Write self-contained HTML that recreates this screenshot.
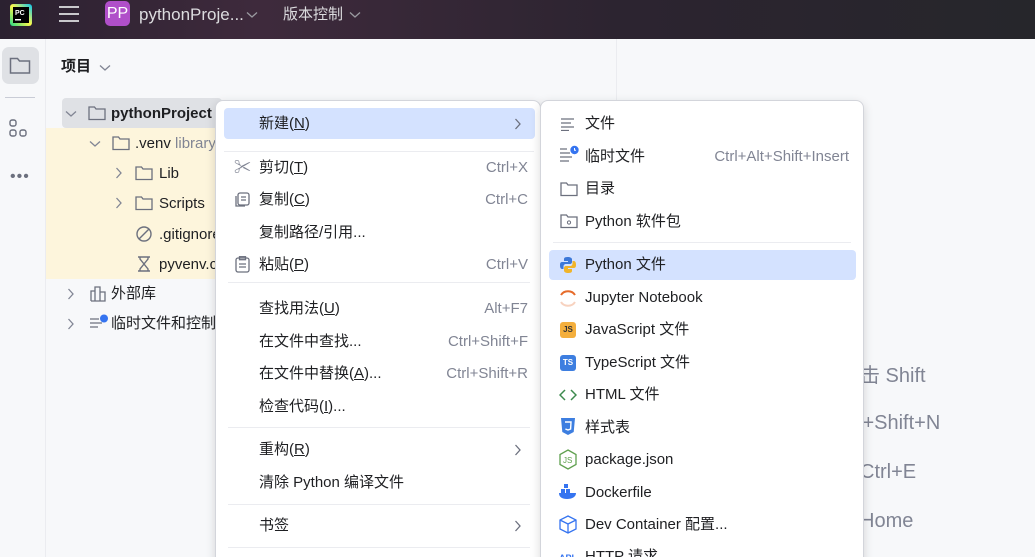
<!DOCTYPE html>
<html><head><meta charset="utf-8"><style>
*{margin:0;padding:0;box-sizing:border-box}
html{width:1035px;height:557px;overflow:hidden}
body{width:1035px;height:557px;overflow:hidden;background:#f7f8fa;font-family:"Liberation Sans","Noto Sans CJK SC",sans-serif;font-size:15px;color:#1e1f22;position:relative}
.abs{position:absolute}
.top{left:0;top:0;width:1035px;height:39px;background:linear-gradient(90deg,#2b2130 0%,#3e2a3c 25%,#2c2430 60%,#26262b 100%)}
.t{position:absolute;white-space:nowrap;line-height:20px}
.menu{position:absolute;background:#fff;border:1px solid #d3d5db;border-radius:8px;box-shadow:0 3px 10px rgba(0,0,0,.15);overflow:hidden}
.sep{position:absolute;height:1px;background:#ebecf0}
.hl{position:absolute;background:#d4e2ff;border-radius:4px}
.sc{position:absolute;color:#818594;white-space:nowrap;line-height:20px;text-align:right}
.gray{color:#818594}
u{text-decoration:underline}
.chr{position:absolute}
</style></head><body>
<div class="abs top"></div>
<svg class="abs" style="left:10px;top:4px" width="22" height="22" viewBox="0 0 22 22"><defs><linearGradient id="g" x1="0" y1="1" x2="1" y2="0"><stop offset="0" stop-color="#21d789"/><stop offset=".5" stop-color="#fcf84a"/><stop offset="1" stop-color="#07c3f2"/></linearGradient></defs><rect x="0" y="0" width="22" height="22" rx="3" fill="url(#g)"/><rect x="3" y="3" width="16" height="16" fill="#000"/><text x="5" y="11" font-size="7" fill="#fff" font-family="Liberation Sans" font-weight="bold">PC</text><rect x="5" y="15" width="6" height="1.5" fill="#fff"/></svg>
<div class="abs" style="left:59px;top:6px;width:20px;height:2px;background:#c9c9cc;box-shadow:0 7px 0 #c9c9cc,0 14px 0 #c9c9cc"></div>
<div class="abs" style="left:105px;top:1px;width:25px;height:25px;border-radius:5px;background:#b04fc9;color:#fff;font-size:16px;line-height:25px;text-align:center">PP</div>
<div class="t" style="left:139px;top:5px;color:#dcdcdf;font-size:17px">pythonProje...</div>
<svg class="chr" style="left:246px;top:11px" width="12" height="8"><path d="M1 1.5l5 4.5 5-4.5" fill="none" stroke="#9a9aa0" stroke-width="1.3"/></svg>
<div class="t" style="left:283px;top:5px;color:#dcdcdf;font-size:15px">版本控制</div>
<svg class="chr" style="left:349px;top:11px" width="12" height="8"><path d="M1 1.5l5 4.5 5-4.5" fill="none" stroke="#9a9aa0" stroke-width="1.3"/></svg>
<!-- left strip -->
<div class="abs" style="left:45px;top:39px;width:1px;height:518px;background:#ebecf0"></div>
<div class="abs" style="left:2px;top:47px;width:37px;height:37px;border-radius:7px;background:#dfe1e5"></div>
<svg class="abs" style="left:9px;top:55px" width="22" height="20"><path d="M1.5 3.5h7l2 2.5h10v12h-19z" fill="none" stroke="#6c707e" stroke-width="1.5"/></svg>
<div class="abs" style="left:5px;top:97px;width:30px;height:1px;background:#c9ccd6"></div>
<svg class="abs" style="left:9px;top:119px" width="22" height="22" fill="none" stroke="#6c707e" stroke-width="1.4"><rect x="1" y="1" width="6" height="6" rx="2"/><rect x="1" y="11" width="6" height="6" rx="2"/><rect x="11" y="11" width="6" height="6" rx="2"/></svg>
<div class="t" style="left:10px;top:167px;color:#6c707e;font-size:16px;letter-spacing:1px">•••</div>
<!-- panel -->
<div class="abs" style="left:616px;top:39px;width:1px;height:518px;background:#ebecf0"></div>
<div class="t" style="left:61px;top:57px;font-weight:bold;font-size:15px">项目</div>
<svg class="chr" style="left:99px;top:64px" width="12" height="8"><path d="M1 1.5l5 4.5 5-4.5" fill="none" stroke="#818594" stroke-width="1.3"/></svg>
<div class="abs" style="left:62px;top:98px;width:160px;height:30px;background:#dfe1e5;border-radius:4px"></div>
<div class="abs" style="left:46px;top:128px;width:175px;height:151px;background:#fdf5dc"></div>
<svg class="chr" style="left:65px;top:110px" width="12" height="8"><path d="M1 1.5l5 4.5 5-4.5" fill="none" stroke="#818594" stroke-width="1.3"/></svg>
<svg class="abs" style="left:88px;top:105px" width="18" height="16"><path d="M1 2h5.5l1.5 2h9v10.5h-16z" fill="none" stroke="#6c707e" stroke-width="1.3"/></svg>
<div class="t" style="left:111px;top:104px;font-weight:bold">pythonProject</div>
<svg class="chr" style="left:89px;top:140px" width="12" height="8"><path d="M1 1.5l5 4.5 5-4.5" fill="none" stroke="#818594" stroke-width="1.3"/></svg>
<svg class="abs" style="left:112px;top:135px" width="18" height="16"><path d="M1 2h5.5l1.5 2h9v10.5h-16z" fill="none" stroke="#6c707e" stroke-width="1.3"/></svg>
<div class="t" style="left:135px;top:134px">.venv <span class="gray">library root</span></div>
<svg class="chr" style="left:115px;top:167px" width="8" height="12"><path d="M1.5 1l4.5 5-4.5 5" fill="none" stroke="#818594" stroke-width="1.3"/></svg>
<svg class="abs" style="left:135px;top:165px" width="18" height="16"><path d="M1 2h5.5l1.5 2h9v10.5h-16z" fill="none" stroke="#6c707e" stroke-width="1.3"/></svg>
<div class="t" style="left:159px;top:164px">Lib</div>
<svg class="chr" style="left:115px;top:197px" width="8" height="12"><path d="M1.5 1l4.5 5-4.5 5" fill="none" stroke="#818594" stroke-width="1.3"/></svg>
<svg class="abs" style="left:135px;top:195px" width="18" height="16"><path d="M1 2h5.5l1.5 2h9v10.5h-16z" fill="none" stroke="#6c707e" stroke-width="1.3"/></svg>
<div class="t" style="left:159px;top:194px">Scripts</div>
<svg class="abs" style="left:136px;top:226px" width="18" height="18" fill="none" stroke="#6c707e" stroke-width="1.4"><circle cx="8" cy="8" r="7"/><path d="M3 13L13 3"/></svg>
<div class="t" style="left:159px;top:225px">.gitignore</div>
<svg class="abs" style="left:137px;top:256px" width="16" height="18" fill="none" stroke="#6c707e" stroke-width="1.4"><path d="M1 1h12M1 15h12M3 1v2l4 5-4 5v2M11 1v2l-4 5 4 5v2"/></svg>
<div class="t" style="left:159px;top:255px">pyvenv.cfg</div>
<svg class="chr" style="left:67px;top:288px" width="8" height="12"><path d="M1.5 1l4.5 5-4.5 5" fill="none" stroke="#818594" stroke-width="1.3"/></svg>
<svg class="abs" style="left:90px;top:286px" width="18" height="16" fill="none" stroke="#6c707e" stroke-width="1.3"><path d="M1 15V5h4v10M5 15V1h5v14M10 15V6h5v9zM1 15h14"/></svg>
<div class="t" style="left:111px;top:284px">外部库</div>
<svg class="chr" style="left:67px;top:318px" width="8" height="12"><path d="M1.5 1l4.5 5-4.5 5" fill="none" stroke="#818594" stroke-width="1.3"/></svg>
<svg class="abs" style="left:89px;top:314px" width="20" height="18"><path d="M1 5h9M1 9h12M1 13h8" stroke="#6c707e" stroke-width="1.3"/><circle cx="15" cy="4.5" r="4" fill="#3574f0"/></svg>
<div class="t" style="left:111px;top:314px">临时文件和控制台</div>
<!-- right bg text -->
<div class="t" style="left:860px;top:364px;color:#818594;font-size:20px;line-height:24px">击 Shift</div>
<div class="t" style="left:858px;top:411px;color:#818594;font-size:20px;line-height:24px">l+Shift+N</div>
<div class="t" style="left:860px;top:460px;color:#818594;font-size:20px;line-height:24px">Ctrl+E</div>
<div class="t" style="left:860px;top:509px;color:#818594;font-size:20px;line-height:24px">Home</div>
<!-- menu 1 -->
<div class="menu" style="left:215px;top:100px;width:326px;height:470px">
<div class="hl" style="left:8px;top:7px;width:311px;height:31px"></div>
<div class="t" style="left:43px;top:13px">新建(<u>N</u>)</div>
<svg class="chr" style="left:298px;top:17px" width="8" height="12"><path d="M1.5 1l4.5 5-4.5 5" fill="none" stroke="#6c707e" stroke-width="1.3"/></svg>
<div class="sep" style="left:8px;top:50px;width:310px"></div>
<div class="t gray" style="left:18px;top:57px;font-size:17px">✂</div>
<div class="t" style="left:43px;top:57px">剪切(<u>T</u>)</div><div class="sc" style="right:12px;top:57px">Ctrl+X</div>
<svg class="abs" style="left:19px;top:91px" width="16" height="16" fill="none" stroke="#6c707e" stroke-width="1.3"><rect x="3" y="1" width="11" height="12" rx="2"/><path d="M1 4v10h9M6 5h5M6 8h5"/></svg>
<div class="t" style="left:43px;top:89px">复制(<u>C</u>)</div><div class="sc" style="right:12px;top:89px">Ctrl+C</div>
<div class="t" style="left:43px;top:122px">复制路径/引用...</div>
<svg class="abs" style="left:19px;top:155px" width="16" height="17" fill="none" stroke="#6c707e" stroke-width="1.3"><rect x="1" y="2" width="13" height="14" rx="2"/><rect x="4.5" y="0.7" width="6" height="3"/><path d="M4 8h7M4 11h7"/></svg>
<div class="t" style="left:43px;top:154px">粘贴(<u>P</u>)</div><div class="sc" style="right:12px;top:154px">Ctrl+V</div>
<div class="sep" style="left:12px;top:181px;width:302px"></div>
<div class="t" style="left:43px;top:198px">查找用法(<u>U</u>)</div><div class="sc" style="right:12px;top:198px">Alt+F7</div>
<div class="t" style="left:43px;top:231px">在文件中查找...</div><div class="sc" style="right:12px;top:231px">Ctrl+Shift+F</div>
<div class="t" style="left:43px;top:263px">在文件中替换(<u>A</u>)...</div><div class="sc" style="right:12px;top:263px">Ctrl+Shift+R</div>
<div class="t" style="left:43px;top:296px">检查代码(<u>I</u>)...</div>
<div class="sep" style="left:12px;top:326px;width:302px"></div>
<div class="t" style="left:43px;top:339px">重构(<u>R</u>)</div>
<svg class="chr" style="left:298px;top:343px" width="8" height="12"><path d="M1.5 1l4.5 5-4.5 5" fill="none" stroke="#6c707e" stroke-width="1.3"/></svg>
<div class="t" style="left:43px;top:372px">清除 Python 编译文件</div>
<div class="sep" style="left:12px;top:403px;width:302px"></div>
<div class="t" style="left:43px;top:415px">书签</div>
<svg class="chr" style="left:298px;top:419px" width="8" height="12"><path d="M1.5 1l4.5 5-4.5 5" fill="none" stroke="#6c707e" stroke-width="1.3"/></svg>
<div class="sep" style="left:12px;top:446px;width:302px"></div>
</div>
<!-- menu 2 -->
<div class="menu" style="left:540px;top:100px;width:324px;height:470px">
<svg class="abs" style="left:19px;top:16px" width="16" height="14" stroke="#6c707e" stroke-width="1.3"><path d="M1 2h13M1 6h10M1 10h13M1 13.5h8"/></svg>
<div class="t" style="left:44px;top:13px">文件</div>
<svg class="abs" style="left:17px;top:44px" width="22" height="20"><path d="M2 8h10M2 12h12M2 16h9M2 4h7" stroke="#6c707e" stroke-width="1.3"/><circle cx="16.5" cy="5" r="4.2" fill="#3574f0"/><path d="M16.5 3v2.3h1.5" stroke="#fff" stroke-width="1" fill="none"/></svg>
<div class="t" style="left:44px;top:46px">临时文件</div><div class="sc" style="right:14px;top:46px">Ctrl+Alt+Shift+Insert</div>
<svg class="abs" style="left:19px;top:80px" width="18" height="16"><path d="M1 2h5.5l1.5 2h9v10.5h-16z" fill="none" stroke="#6c707e" stroke-width="1.3"/></svg>
<div class="t" style="left:44px;top:78px">目录</div>
<svg class="abs" style="left:19px;top:112px" width="18" height="16"><path d="M1 2h5.5l1.5 2h9v10.5h-16z" fill="none" stroke="#6c707e" stroke-width="1.3"/><circle cx="9" cy="9.5" r="1.6" fill="none" stroke="#6c707e"/></svg>
<div class="t" style="left:44px;top:111px">Python 软件包</div>
<div class="sep" style="left:12px;top:141px;width:298px"></div>
<div class="hl" style="left:8px;top:149px;width:307px;height:30px"></div>
<svg class="abs" style="left:18px;top:155px" width="18" height="18"><path d="M8.5 1C5 1 5 2.5 5 3.5V5h4v1H3C1 6 1 8 1 9.5S1.5 13 3 13h1.5v-2.5C4.5 9 5.5 8 7 8h4c1.3 0 2-1 2-2V3.5C13 2 11.5 1 8.5 1z" fill="#3c78d8"/><path d="M9.5 17c3.5 0 3.5-1.5 3.5-2.5V13H9v-1h6c2 0 2-2 2-3.5S16.5 5 15 5h-1.5v2.5C13.5 9 12.5 10 11 10H7c-1.3 0-2 1-2 2v2.5C5 16 6.5 17 9.5 17z" fill="#f0b429"/></svg>
<div class="t" style="left:44px;top:154px">Python 文件</div>
<svg class="abs" style="left:19px;top:188px" width="16" height="18" fill="none" stroke="#e66b2a" stroke-width="2"><path d="M1 6c3-5 11-5 14 0"/><path d="M1 13c3 5 11 5 14 0" stroke-opacity=".3"/></svg>
<div class="t" style="left:44px;top:187px">Jupyter Notebook</div>
<div class="abs" style="left:19px;top:221px;width:16px;height:16px;border-radius:3px;background:#f4af3d;font-size:8px;font-weight:bold;line-height:16px;text-align:center;color:#333">JS</div>
<div class="t" style="left:44px;top:219px">JavaScript 文件</div>
<div class="abs" style="left:19px;top:254px;width:16px;height:16px;border-radius:3px;background:#3d7ee0;font-size:8px;font-weight:bold;line-height:16px;text-align:center;color:#fff">TS</div>
<div class="t" style="left:44px;top:252px">TypeScript 文件</div>
<svg class="abs" style="left:18px;top:286px" width="18" height="16" fill="none" stroke="#3d8a4e" stroke-width="1.5"><path d="M6 3L1 8l5 5M12 3l5 5-5 5"/></svg>
<div class="t" style="left:44px;top:284px">HTML 文件</div>
<svg class="abs" style="left:20px;top:317px" width="14" height="18"><path d="M0 0h14l-1.3 14L7 17 1.3 14z" fill="#3d7ee0"/><path d="M4 4h6l-.4 7L7 12l-2.6-1" stroke="#fff" stroke-width="1.4" fill="none"/></svg>
<div class="t" style="left:44px;top:317px">样式表</div>
<svg class="abs" style="left:17px;top:348px" width="20" height="22" fill="none" stroke="#5fa04e" stroke-width="1.3"><path d="M10 1l8 4.5v10L10 20l-8-4.5v-10z"/><text x="5" y="14" font-size="8" fill="#5fa04e" stroke="none" font-family="Liberation Sans">JS</text></svg>
<div class="t" style="left:44px;top:349px">package.json</div>
<svg class="abs" style="left:17px;top:383px" width="20" height="16"><rect x="6" y="0" width="4" height="4" fill="#3574f0"/><rect x="3" y="5" width="4" height="4" fill="#3574f0"/><rect x="8" y="5" width="4" height="4" fill="#3574f0"/><path d="M1 9h17c0 4-4 6-9 6S1 13 1 9z" fill="#3574f0"/></svg>
<div class="t" style="left:44px;top:382px">Dockerfile</div>
<svg class="abs" style="left:18px;top:414px" width="18" height="19" fill="none" stroke="#3574f0" stroke-width="1.3"><path d="M9 1l8 4v9l-8 4-8-4V5z M1 5l8 4 8-4M9 9v9"/></svg>
<div class="t" style="left:44px;top:414px">Dev Container 配置...</div>
<div class="t" style="left:18px;top:447px;color:#3574f0;font-size:9px;font-weight:bold">API</div>
<div class="t" style="left:44px;top:446px">HTTP 请求</div>
</div>
</body></html>
